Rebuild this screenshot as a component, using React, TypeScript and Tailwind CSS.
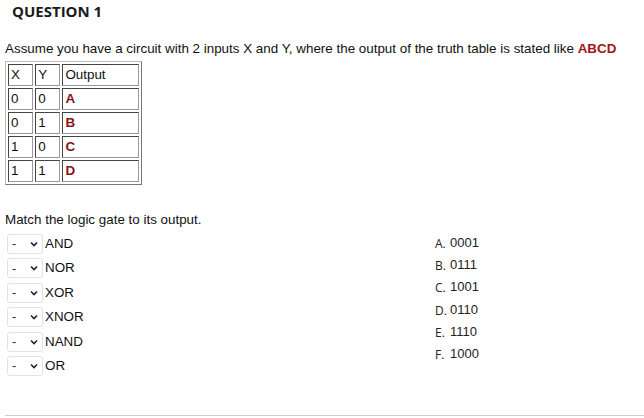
import React from "react";

const rows = [
  ["X", "Y", "Output"],
  ["0", "0", "A"],
  ["0", "1", "B"],
  ["1", "0", "C"],
  ["1", "1", "D"],
];

const gates = ["AND", "NOR", "XOR", "XNOR", "NAND", "OR"];

const answers = [
  ["A.", "0001"],
  ["B.", "0111"],
  ["C.", "1001"],
  ["D.", "0110"],
  ["E.", "1110"],
  ["F.", "1000"],
];

function Chevron() {
  return (
    <svg width="8" height="6" viewBox="0 0 8 6" className="block">
      <path d="M1 1.5 L4 4.5 L7 1.5" fill="none" stroke="#222" strokeWidth="1.6" />
    </svg>
  );
}

export default function App() {
  return (
    <div className="w-[644px] h-[418px] bg-white flex flex-col overflow-hidden text-[#111] font-['Liberation_Sans',Arial,sans-serif]">
      <div className="pl-[12px] pt-[2px] h-[20px] leading-[18px] text-[15px] font-bold font-['Open_Sans',sans-serif] text-[#1a1a1a]">
        QUESTION 1
      </div>

      <p className="mt-[21px] pl-[5px] text-[13.4px] leading-[16px]">
        Assume you have a circuit with 2 inputs X and Y, where the output of the truth table is stated like{" "}
        <b className="text-[#a3151b]">ABCD</b>
      </p>

      <table className="mt-[4px] ml-[5px] border border-t-[#bbb] border-l-[#bbb] border-r-[#777] border-b-[#777] border-separate border-spacing-[2px] text-[13.4px] leading-[16px] w-[137px]">
        <tbody>
          {rows.map((r, i) => (
            <tr key={i}>
              {r.map((c, j) => (
                <td
                  key={j}
                  className={`h-[22px] px-[2px] py-0 border border-t-[#444] border-l-[#444] border-r-[#999] border-b-[#999] ${
                    j === 2 ? "w-[76px]" : "w-[25px]"
                  } ${i > 0 && j === 2 ? "font-bold text-[#8a1414]" : ""}`}
                >
                  {c}
                </td>
              ))}
            </tr>
          ))}
        </tbody>
      </table>

      <p className="mt-[27px] pl-[5px] text-[13.4px] leading-[16px]">Match the logic gate to its output.</p>

      <div className="mt-[6px] flex">
        <div className="flex flex-col gap-[4.4px] pl-[7px] w-[435px]">
          {gates.map((g) => (
            <div key={g} className="flex items-center h-[20px]">
              <div className="w-[36px] h-[20px] border border-[#e2e2e2] rounded-[3px] flex items-center pl-[4px] pr-[4px] justify-between text-[13px]">
                <span className="text-[#333]">-</span>
                <Chevron />
              </div>
              <span className="ml-[2px] text-[13.4px] leading-[16px]">{g}</span>
            </div>
          ))}
        </div>
        <div className="flex flex-col -mt-[2px]">
          {answers.map(([l, n]) => (
            <div key={l} className="flex items-baseline h-[22.2px] leading-[22px]">
              <span className="w-[15px] text-[12px] font-['Open_Sans',sans-serif] text-[#222] translate-y-[1px]">{l}</span>
              <span className="text-[13px] text-[#222]">{n}</span>
            </div>
          ))}
        </div>
      </div>

      <div className="mt-auto mb-[2px] ml-[5px] h-px bg-[#cfcfcf]" />
    </div>
  );
}
